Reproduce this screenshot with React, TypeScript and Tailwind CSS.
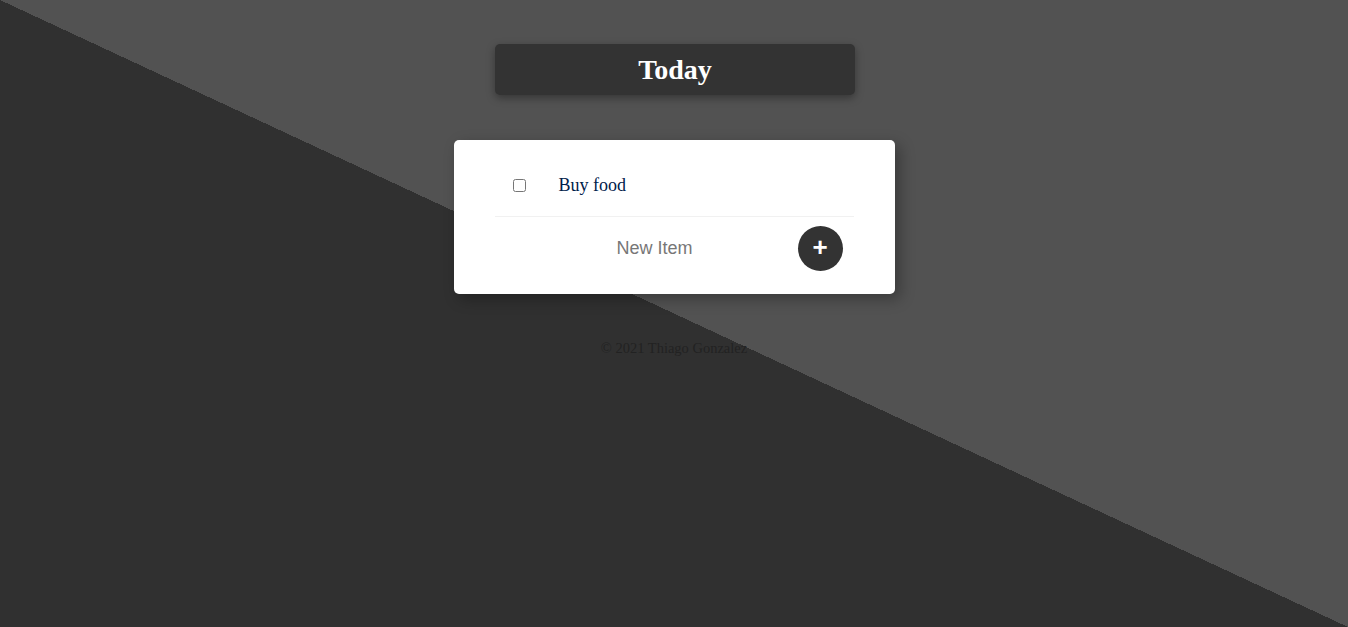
import { useState } from 'react';

export default function App() {
  const [items] = useState<string[]>(['Buy food']);

  return (
    <div className="min-h-screen w-full bg-[linear-gradient(to_top_right,#303030_50%,#525252_50%)] font-['Liberation_Serif',serif] flex flex-col items-center pt-[44px]">
      <div className="ml-[2px] w-[360px] h-[51px] bg-[#333333] rounded-[5px] shadow-[0_3px_8px_rgba(0,0,0,0.35)] flex items-center justify-center">
        <h1 className="text-white text-[28px] font-bold leading-none">Today</h1>
      </div>

      <div className="mt-[45px] w-[441px] bg-white rounded-[5px] shadow-[5px_5px_15px_rgba(0,0,0,0.3)] px-[41px] pt-[15px] pb-[15px]">
        {items.map((item) => (
          <div key={item} className="h-[62px] flex items-center border-b border-[#f1f1f1]">
            <input type="checkbox" className="ml-[18px] w-[13px] h-[13px]" />
            <p className="ml-[33px] text-[18px] text-[#00204a]">{item}</p>
          </div>
        ))}
        <form className="h-[62px] flex items-center" onSubmit={(e) => e.preventDefault()}>
          <input
            type="text"
            placeholder="New Item"
            className="w-[320px] text-center text-[18px] font-['Liberation_Sans',sans-serif] outline-none placeholder:text-[#777777]"
          />
          <button
            type="submit"
            className="ml-[-17px] w-[45px] h-[45px] rounded-full bg-[#333333] text-white text-[26px] font-bold font-['Liberation_Sans',sans-serif] flex items-center justify-center leading-none pb-[2px]"
          >
            +
          </button>
        </form>
      </div>

      <footer className="mt-[44px] text-[14.5px] text-[#222222]">© 2021 Thiago Gonzalez</footer>
    </div>
  );
}
